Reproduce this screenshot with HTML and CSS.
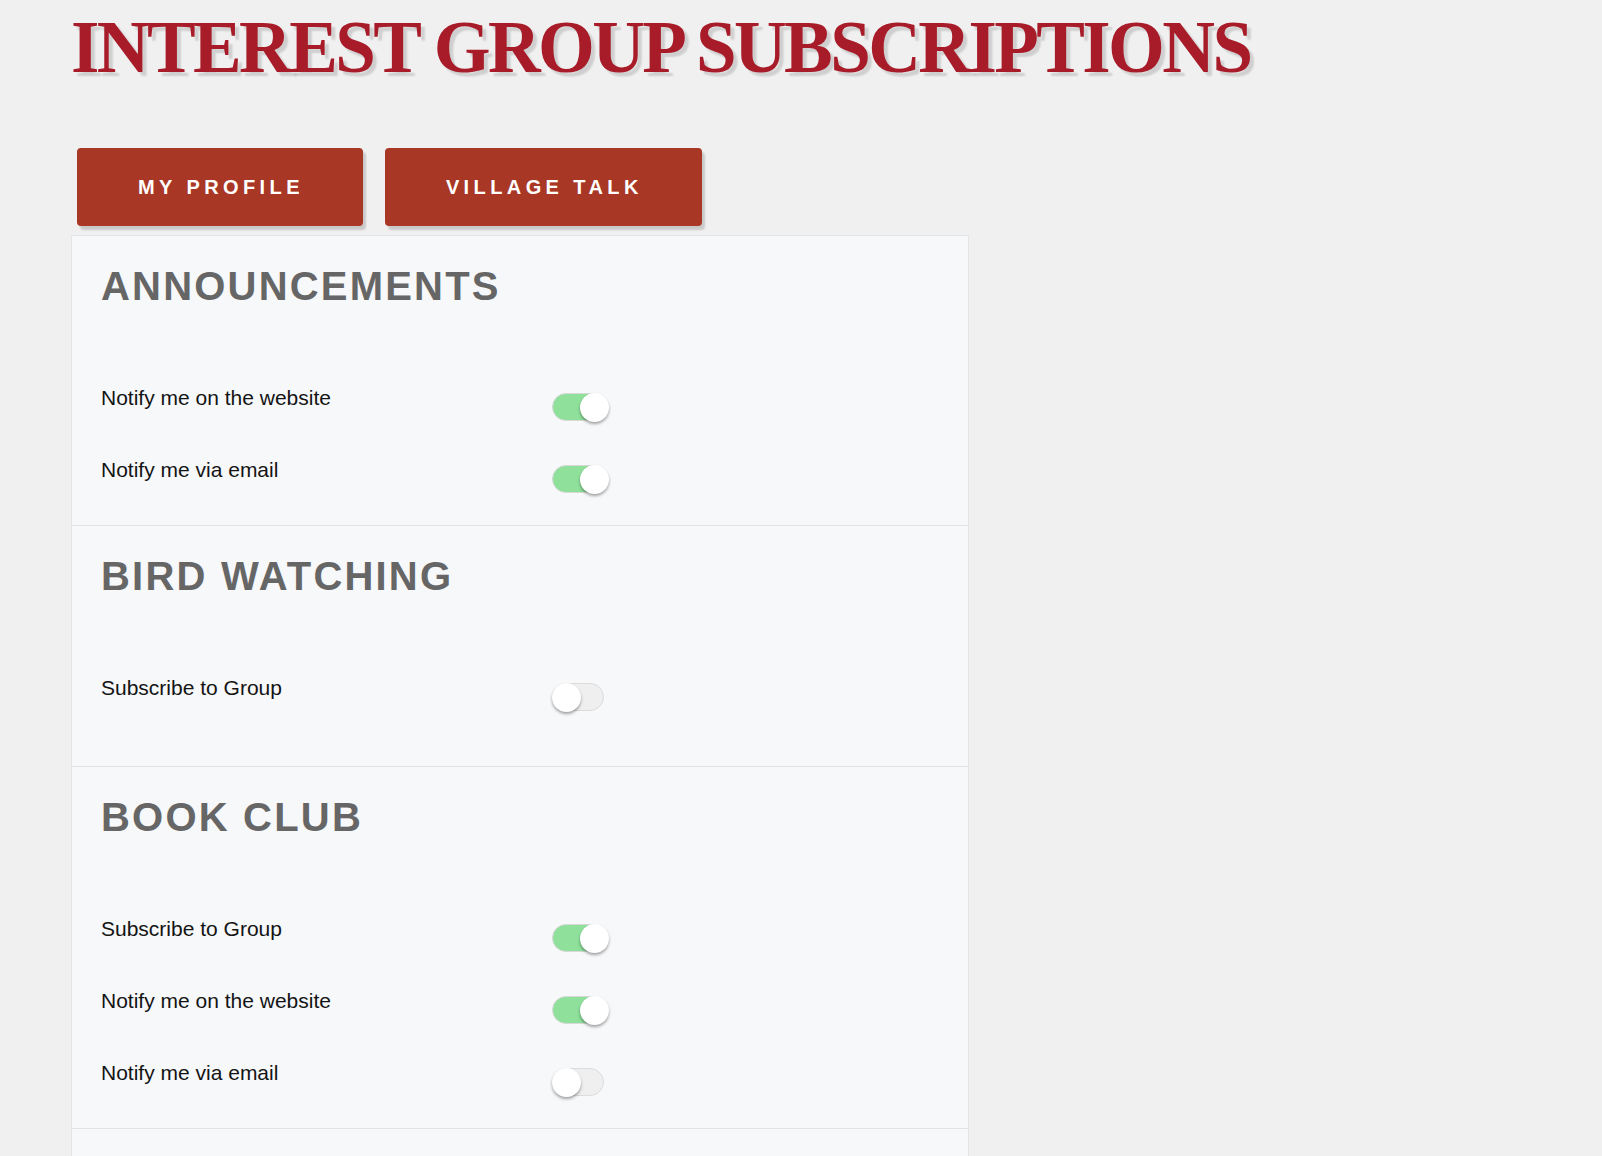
FILE: index.html
```html
<!DOCTYPE html>
<html lang="en">
<head>
<meta charset="utf-8">
<title>Interest Group Subscriptions</title>
<link rel="stylesheet" href="styles.css">
</head>
<body>
<div class="page">
  <h1 class="page-title">INTEREST GROUP SUBSCRIPTIONS</h1>
  <nav class="tabs">
    <a class="tab-btn" href="#">MY PROFILE</a>
    <a class="tab-btn" href="#">VILLAGE TALK</a>
  </nav>
  <div class="panel">
    <section class="group">
      <h2 class="group-title">ANNOUNCEMENTS</h2>
      <div class="rows">
        <div class="row">
          <span class="row-label">Notify me on the website</span>
          <label class="toggle"><input type="checkbox" checked><span class="track"></span></label>
        </div>
        <div class="row">
          <span class="row-label">Notify me via email</span>
          <label class="toggle"><input type="checkbox" checked><span class="track"></span></label>
        </div>
      </div>
    </section>
    <section class="group group--single">
      <h2 class="group-title">BIRD WATCHING</h2>
      <div class="rows">
        <div class="row">
          <span class="row-label">Subscribe to Group</span>
          <label class="toggle"><input type="checkbox"><span class="track"></span></label>
        </div>
      </div>
    </section>
    <section class="group">
      <h2 class="group-title">BOOK CLUB</h2>
      <div class="rows">
        <div class="row">
          <span class="row-label">Subscribe to Group</span>
          <label class="toggle"><input type="checkbox" checked><span class="track"></span></label>
        </div>
        <div class="row">
          <span class="row-label">Notify me on the website</span>
          <label class="toggle"><input type="checkbox" checked><span class="track"></span></label>
        </div>
        <div class="row">
          <span class="row-label">Notify me via email</span>
          <label class="toggle"><input type="checkbox"><span class="track"></span></label>
        </div>
      </div>
    </section>
    <section class="group group--empty"></section>
  </div>
</div>
</body>
</html>
```

FILE: styles.css
```css
html, body {
  margin: 0;
  padding: 0;
  background: #f0f0f0;
  font-family: "Liberation Sans", Arial, sans-serif;
}

.page {
  padding: 8px 0 0 71px;
}

.page-title {
  margin: 0;
  font-family: "Liberation Serif", "Times New Roman", serif;
  font-weight: bold;
  font-size: 73px;
  line-height: 79px;
  letter-spacing: -2.6px;
  color: #a81b29;
  text-shadow: 4px 4px 2px rgba(0, 0, 0, 0.14);
  white-space: nowrap;
}

.tabs {
  display: flex;
  gap: 22px;
  margin: 61px 0 9px 6px;
}

.tab-btn {
  display: block;
  padding: 27px 59px 27px 61px;
  background: #a93726;
  color: #fff;
  font-weight: bold;
  font-size: 20px;
  line-height: 24px;
  letter-spacing: 4.4px;
  text-decoration: none;
  border-radius: 4px;
  box-shadow: 3px 4px 2px rgba(0, 0, 0, 0.16);
}

.panel {
  width: 898px;
  box-sizing: border-box;
  background: #f7f8fa;
  border: 1px solid #e2e4e7;
  border-bottom: none;
}

.group {
  padding: 26px 29px 19px;
}

.group + .group {
  border-top: 1px solid #e2e4e7;
}

.group--single {
  padding-bottom: 42px;
}

.group--empty {
  min-height: 120px;
}

.group-title {
  margin: 0 0 76px;
  font-size: 40px;
  line-height: 48px;
  font-weight: bold;
  letter-spacing: 2.2px;
  color: #666;
}

.rows {
  display: flex;
  flex-direction: column;
  gap: 24px;
}

.row {
  display: flex;
  align-items: flex-start;
  height: 48px;
}

.row-label {
  width: 451px;
  flex: none;
  font-size: 21px;
  line-height: 24px;
  color: #141414;
}

.toggle {
  position: relative;
  display: block;
  width: 52px;
  height: 28px;
  margin-top: 7px;
}

.toggle input {
  position: absolute;
  opacity: 0;
  width: 0;
  height: 0;
  margin: 0;
}

.track {
  display: block;
  box-sizing: border-box;
  width: 52px;
  height: 28px;
  border-radius: 14px;
  background: #efefef;
  border: 1px solid #dcdcdc;
}

.track::after {
  content: "";
  position: absolute;
  top: 0;
  left: 0;
  width: 29px;
  height: 29px;
  border-radius: 50%;
  background: #fff;
  box-shadow: 0 2px 3px rgba(0, 0, 0, 0.35);
}

.toggle input:checked + .track {
  background: #8ee09a;
  border-color: #d8d8d8;
}

.toggle input:checked + .track::after {
  left: 28px;
}
```
